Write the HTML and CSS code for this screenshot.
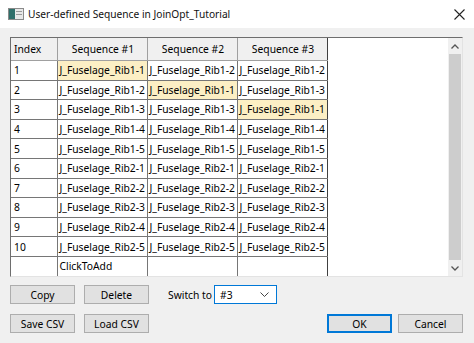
FILE: index.html
```html
<!DOCTYPE html>
<html lang="en">
<head>
  <meta charset="UTF-8">
  <title>User-defined Sequence in JoinOpt_Tutorial</title>
  <link rel="stylesheet" href="styles.css">
</head>
<body>

<div class="titlebar">
  <svg class="app-icon" width="16" height="12" viewBox="0 0 16 12">
    <rect x="0.5" y="0.5" width="15" height="11" fill="#e8e8e8" stroke="#8a8a8a"/>
    <rect x="1" y="1" width="6" height="10" fill="#2f6f6a"/>
    <rect x="8" y="3" width="6" height="1" fill="#9a9a9a"/>
    <rect x="8" y="6" width="6" height="1" fill="#9a9a9a"/>
  </svg>
  <span class="title">User-defined Sequence in JoinOpt_Tutorial</span>
  <svg class="close" width="11" height="11" viewBox="0 0 11 11">
    <path d="M0.5 0.5 L10.5 10.5 M10.5 0.5 L0.5 10.5" stroke="#222" stroke-width="1.1"/>
  </svg>
</div>

<div class="content">
  <div class="grid-frame">
    <div class="grid-area">
      <table class="grid">
        <colgroup>
          <col class="c-index">
          <col class="c-seq">
          <col class="c-seq">
          <col class="c-seq">
        </colgroup>
        <thead>
          <tr>
            <th class="idx">Index</th>
            <th>Sequence #1</th>
            <th>Sequence #2</th>
            <th>Sequence #3</th>
          </tr>
        </thead>
        <tbody>
          <tr><td>1</td><td class="hl">J_Fuselage_Rib1-1</td><td>J_Fuselage_Rib1-2</td><td>J_Fuselage_Rib1-2</td></tr>
          <tr><td>2</td><td>J_Fuselage_Rib1-2</td><td class="hl">J_Fuselage_Rib1-1</td><td>J_Fuselage_Rib1-3</td></tr>
          <tr><td>3</td><td>J_Fuselage_Rib1-3</td><td>J_Fuselage_Rib1-3</td><td class="hl">J_Fuselage_Rib1-1</td></tr>
          <tr><td>4</td><td>J_Fuselage_Rib1-4</td><td>J_Fuselage_Rib1-4</td><td>J_Fuselage_Rib1-4</td></tr>
          <tr><td>5</td><td>J_Fuselage_Rib1-5</td><td>J_Fuselage_Rib1-5</td><td>J_Fuselage_Rib1-5</td></tr>
          <tr><td>6</td><td>J_Fuselage_Rib2-1</td><td>J_Fuselage_Rib2-1</td><td>J_Fuselage_Rib2-1</td></tr>
          <tr><td>7</td><td>J_Fuselage_Rib2-2</td><td>J_Fuselage_Rib2-2</td><td>J_Fuselage_Rib2-2</td></tr>
          <tr><td>8</td><td>J_Fuselage_Rib2-3</td><td>J_Fuselage_Rib2-3</td><td>J_Fuselage_Rib2-3</td></tr>
          <tr><td>9</td><td>J_Fuselage_Rib2-4</td><td>J_Fuselage_Rib2-4</td><td>J_Fuselage_Rib2-4</td></tr>
          <tr><td>10</td><td>J_Fuselage_Rib2-5</td><td>J_Fuselage_Rib2-5</td><td>J_Fuselage_Rib2-5</td></tr>
          <tr><td></td><td>ClickToAdd</td><td></td><td></td></tr>
        </tbody>
      </table>
    </div>
    <div class="scrollbar">
      <div class="arrow">
        <svg width="8" height="5" viewBox="0 0 8 5"><path d="M0.5 4.5 L4 1 L7.5 4.5" fill="none" stroke="#555" stroke-width="1.3"/></svg>
      </div>
      <div class="thumb"></div>
      <div class="arrow">
        <svg width="8" height="5" viewBox="0 0 8 5"><path d="M0.5 0.5 L4 4 L7.5 0.5" fill="none" stroke="#555" stroke-width="1.3"/></svg>
      </div>
    </div>
  </div>

  <div class="row">
    <button class="btn">Copy</button>
    <button class="btn">Delete</button>
    <span class="label">Switch to</span>
    <div class="select">
      <span>#3</span>
      <svg width="9" height="5" viewBox="0 0 9 5"><path d="M0.5 0.5 L4.5 4.5 L8.5 0.5" fill="none" stroke="#444" stroke-width="1"/></svg>
    </div>
  </div>

  <div class="row row-last">
    <button class="btn">Save CSV</button>
    <button class="btn">Load CSV</button>
    <div class="spacer"></div>
    <button class="btn btn-default">OK</button>
    <button class="btn">Cancel</button>
  </div>
</div>

</body>
</html>
```

FILE: styles.css
```css
body {
  margin: 0;
  background-color: #f0f0f0;
  font-family: 'Noto Sans', 'Open Sans', sans-serif;
  font-size: 10.3px;
  color: #000;
  width: 474px;
  height: 343px;
  overflow: hidden;
}

.titlebar {
  height: 28px;
  background-color: #ffffff;
  display: flex;
  align-items: center;
  padding-left: 8px;
  padding-right: 9px;
}

.app-icon {
  margin-right: 4px;
}

.title {
  flex: 1;
  font-size: 10.2px;
  color: #111;
}

.content {
  padding: 9px 11px 0 10px;
}

.grid-frame {
  display: flex;
  height: 238px;
  background-color: #ffffff;
  border-top: 1px solid #6e6e6e;
  border-left: 1px solid #6e6e6e;
  border-right: 1px solid #e3e3e3;
  border-bottom: 1px solid #e3e3e3;
}

.grid-area {
  flex: 1;
  overflow: hidden;
}

.grid {
  border-collapse: collapse;
  table-layout: fixed;
  width: 316px;
}

.c-index {
  width: 46px;
}

.c-seq {
  width: 90px;
}

.grid th,
.grid td {
  border: 1px solid #767676;
  padding: 0 0 0 2px;
  white-space: nowrap;
  overflow: hidden;
  text-align: left;
  font-weight: normal;
}

.grid tr:first-child th {
  border-top: none;
}

.grid tr th:first-child,
.grid tr td:first-child {
  border-left: none;
  padding-left: 3px;
}

.grid th {
  height: 22px;
  background-color: #f0f0f0;
  text-align: center;
  border-color: #a0a0a0;
}

.grid th.idx {
  text-align: left;
}

.grid td {
  height: 18.6px;
  line-height: 18px;
}

.grid td:last-child,
.grid th:last-child {
  border-right-color: #404040;
}

.grid td.hl {
  background-color: #fcefc4;
}

.scrollbar {
  width: 14px;
  margin-left: 1px;
  background-color: #f0f0f0;
  display: flex;
  flex-direction: column;
}

.arrow {
  height: 16px;
  display: flex;
  align-items: center;
  justify-content: center;
}

.thumb {
  flex: 1;
  margin: 0 1px;
  background-color: #cdcdcd;
}

.row {
  display: flex;
  align-items: center;
  margin-top: 8px;
}

.row-last {
  margin-top: 10px;
}

.btn {
  width: 65px;
  height: 19px;
  margin-right: 9px;
  padding: 0;
  background-color: #e1e1e1;
  border: 1px solid #adadad;
  font-family: inherit;
  font-size: 10.3px;
  color: #000;
}

.btn-default {
  border: 2px solid #0078d7;
  margin-right: 6px;
}

.row-last .btn:last-child {
  margin-right: 0;
}

.label {
  margin-left: 10px;
  margin-right: 2px;
}

.select {
  width: 63px;
  height: 19px;
  background-color: #ffffff;
  border: 1px solid #0078d7;
  display: flex;
  align-items: center;
  justify-content: space-between;
  padding: 0 7px 0 5px;
  box-sizing: border-box;
}

.spacer {
  flex: 1;
}
```
